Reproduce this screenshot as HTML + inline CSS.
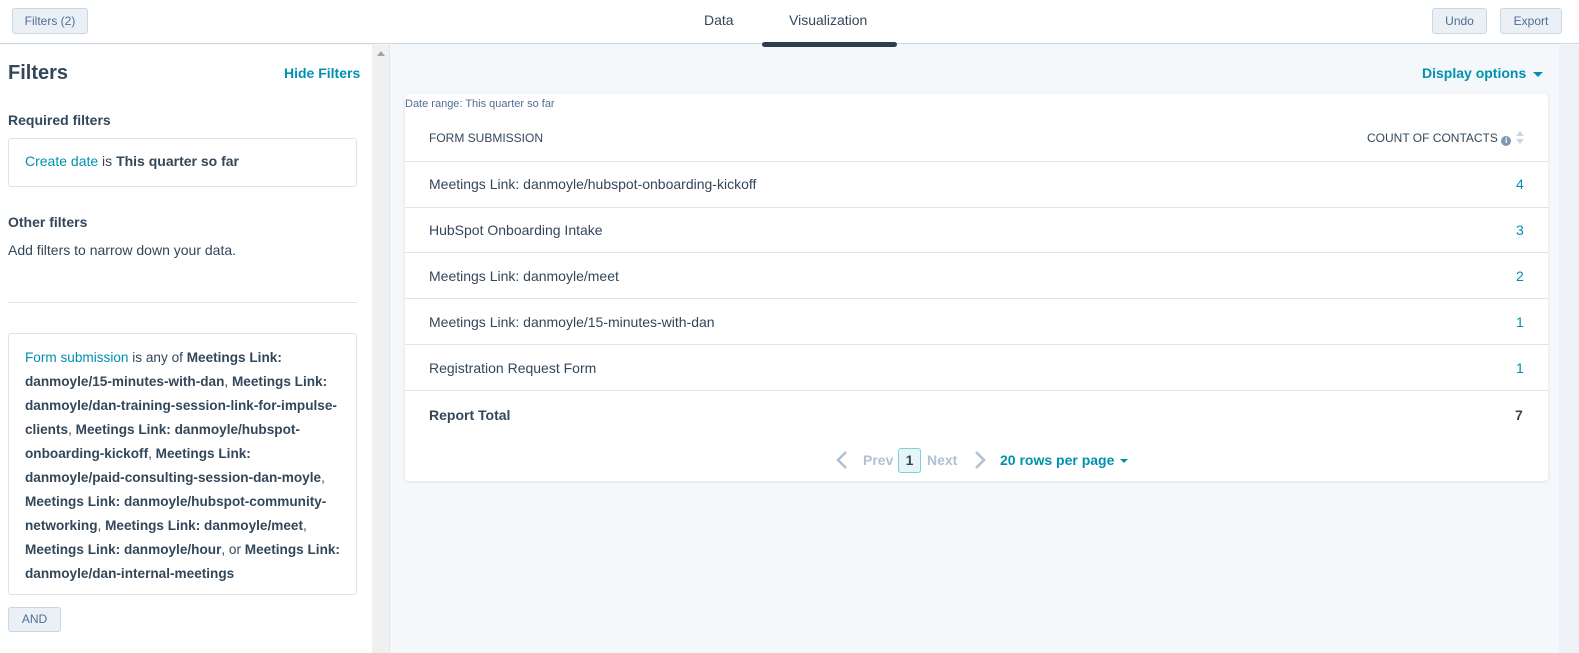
<!DOCTYPE html>
<html><head><meta charset="utf-8"><style>
*{margin:0;padding:0;box-sizing:border-box}
body{width:1579px;height:653px;overflow:hidden;font-family:"Liberation Sans",sans-serif;color:#33475b;background:#f5f8fa;position:relative;font-size:14px}
.a{position:absolute;white-space:nowrap}
.btn{position:absolute;background:#eaf0f6;border:1px solid #cbd6e2;border-radius:3px;color:#506e91;font-size:12px;text-align:center}
.link{color:#0091ae}
b{font-weight:600}
.row{position:absolute;left:405px;width:1143px;border-top:1px solid #dfe3eb}
</style></head><body>
<div class="a" style="left:0;top:0;width:1579px;height:44px;background:#fff;border-bottom:1px solid #cbd6e2"></div>
<div class="btn" style="left:12px;top:8px;width:76px;height:26px;line-height:24px">Filters (2)</div>
<div class="a" style="left:704px;top:12px;font-size:14px">Data</div>
<div class="a" style="left:789px;top:12px;font-size:14px">Visualization</div>
<div class="a" style="left:762px;top:42px;width:135px;height:5px;background:#2d3e50;border-radius:3px"></div>
<div class="btn" style="left:1432px;top:8px;width:55px;height:26px;line-height:24px">Undo</div>
<div class="btn" style="left:1500px;top:8px;width:62px;height:26px;line-height:24px">Export</div>

<div class="a" style="left:0;top:45px;width:372px;height:608px;background:#fff"></div>
<div class="a" style="left:372px;top:45px;width:18px;height:608px;background:#f0f0f0;border-right:1px solid #e5e5e5"></div>
<div class="a" style="left:377px;top:51px;width:0;height:0;border-left:4px solid transparent;border-right:4px solid transparent;border-bottom:5px solid #a3a3a3"></div>
<div class="a" style="left:1559px;top:45px;width:20px;height:608px;background:#eef1f5"></div>

<div class="a" style="left:8px;top:62px;font-size:20px;font-weight:bold">Filters</div>
<div class="a link" style="left:284px;top:65px;font-size:14px;font-weight:600">Hide Filters</div>
<div class="a" style="left:8px;top:112px;font-weight:600">Required filters</div>
<div class="a" style="left:8px;top:138px;width:349px;height:49px;border:1px solid #dfe3eb;border-radius:3px"></div>
<div class="a" style="left:25px;top:153px"><span class="link">Create date</span> is <b>This quarter so far</b></div>
<div class="a" style="left:8px;top:214px;font-weight:600">Other filters</div>
<div class="a" style="left:8px;top:242px">Add filters to narrow down your data.</div>
<div class="a" style="left:8px;top:302px;width:349px;height:1px;background:#dfe3eb"></div>
<div class="a" style="left:8px;top:333px;width:349px;height:262px;border:1px solid #dfe3eb;border-radius:3px"></div>
<div class="a" style="left:25px;top:346px;line-height:24px;font-size:13.6px"><span class="link">Form submission</span> is any of <b>Meetings Link:</b><br><b>danmoyle/15-minutes-with-dan</b>, <b>Meetings Link:</b><br><b>danmoyle/dan-training-session-link-for-impulse-</b><br><b>clients</b>, <b>Meetings Link: danmoyle/hubspot-</b><br><b>onboarding-kickoff</b>, <b>Meetings Link:</b><br><b>danmoyle/paid-consulting-session-dan-moyle</b>,<br><b>Meetings Link: danmoyle/hubspot-community-</b><br><b>networking</b>, <b>Meetings Link: danmoyle/meet</b>,<br><b>Meetings Link: danmoyle/hour</b>, or <b>Meetings Link:</b><br><b>danmoyle/dan-internal-meetings</b></div>
<div class="btn" style="left:8px;top:607px;width:53px;height:25px;line-height:23px">AND</div>

<div class="a link" style="left:1422px;top:65px;font-weight:600">Display options <span style="display:inline-block;width:0;height:0;border-left:5px solid transparent;border-right:5px solid transparent;border-top:5px solid #0091ae;vertical-align:middle;margin-left:3px"></span></div>
<div class="a" style="left:405px;top:94px;width:1143px;height:387px;background:#fff;border-radius:4px;box-shadow:0 1px 3px rgba(45,62,80,.12)"></div>
<div class="a" style="left:405px;top:98px;font-size:11px;color:#516f90">Date range: This quarter so far</div>
<div class="a" style="left:429px;top:131px;font-size:12px">FORM SUBMISSION</div>
<div class="a" style="left:1367px;top:131px;font-size:12px">COUNT OF CONTACTS <span style="display:inline-block;width:10px;height:10px;border-radius:50%;background:#7c98b6;color:#fff;font-size:8px;line-height:10px;text-align:center;font-weight:bold;vertical-align:-1px">i</span></div>
<div class="a" style="left:1516px;top:131px;width:0;height:0;border-left:4px solid transparent;border-right:4px solid transparent;border-bottom:5px solid #cbd6e2"></div>
<div class="a" style="left:1516px;top:139px;width:0;height:0;border-left:4px solid transparent;border-right:4px solid transparent;border-top:5px solid #cbd6e2"></div>

<div class="row" style="top:161px"></div>
<div class="a" style="left:429px;top:176px">Meetings Link: danmoyle/hubspot-onboarding-kickoff</div><div class="a link" style="left:1516px;top:176px">4</div>
<div class="row" style="top:207px"></div>
<div class="a" style="left:429px;top:222px">HubSpot Onboarding Intake</div><div class="a link" style="left:1516px;top:222px">3</div>
<div class="row" style="top:252px"></div>
<div class="a" style="left:429px;top:268px">Meetings Link: danmoyle/meet</div><div class="a link" style="left:1516px;top:268px">2</div>
<div class="row" style="top:298px"></div>
<div class="a" style="left:429px;top:314px">Meetings Link: danmoyle/15-minutes-with-dan</div><div class="a link" style="left:1516px;top:314px">1</div>
<div class="row" style="top:344px"></div>
<div class="a" style="left:429px;top:360px">Registration Request Form</div><div class="a link" style="left:1516px;top:360px">1</div>
<div class="row" style="top:390px"></div>
<div class="a" style="left:429px;top:407px;font-weight:bold">Report Total</div><div class="a" style="left:1515px;top:407px;font-weight:bold">7</div>

<svg class="a" style="left:835px;top:450px" width="14" height="20"><path d="M11 2 L3 10 L11 18" stroke="#b0c1d4" stroke-width="2.5" fill="none"/></svg>
<div class="a" style="left:863px;top:452px;color:#b0c1d4;font-weight:600">Prev</div>
<div class="a" style="left:898px;top:448px;width:23px;height:25px;background:#e5f5f8;border:1px solid #7fd1de;border-radius:3px;text-align:center;line-height:23px;font-weight:600">1</div>
<div class="a" style="left:927px;top:452px;color:#b0c1d4;font-weight:600">Next</div>
<svg class="a" style="left:973px;top:450px" width="14" height="20"><path d="M3 2 L11 10 L3 18" stroke="#b0c1d4" stroke-width="2.5" fill="none"/></svg>
<div class="a link" style="left:1000px;top:452px;font-weight:600">20 rows per page <span style="display:inline-block;width:0;height:0;border-left:4px solid transparent;border-right:4px solid transparent;border-top:4px solid #0091ae;vertical-align:middle;margin-left:2px"></span></div>
</body></html>
